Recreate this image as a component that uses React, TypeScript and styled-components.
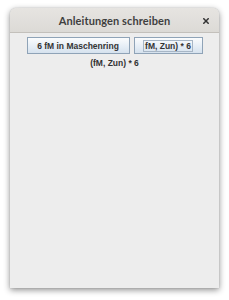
import React from "react";
import styled, { createGlobalStyle } from "styled-components";

const Global = createGlobalStyle`
  html, body { margin: 0; padding: 0; background: #ffffff; }
  #root { width: 229px; height: 300px; }
`;

const Stage = styled.div`
  width: 229px;
  height: 300px;
  padding: 8px 0 0 10px;
  box-sizing: border-box;
`;

const Window = styled.div`
  width: 209px;
  height: 280px;
  display: flex;
  flex-direction: column;
  background: #ededed;
  border-radius: 6px 6px 0 0;
  box-shadow: 0 2px 6px rgba(0, 0, 0, 0.45), 0 0 1px rgba(0, 0, 0, 0.3);
  overflow: hidden;
`;

const TitleBar = styled.div`
  height: 25px;
  flex: none;
  display: flex;
  align-items: center;
  justify-content: center;
  position: relative;
  background: linear-gradient(#e6e4e1, #dcdad6);
  border-bottom: 1px solid #c3c0bb;
  box-sizing: border-box;
`;

const Title = styled.span`
  font-family: Lato, "Noto Sans", sans-serif;
  font-weight: 700;
  font-size: 11px;
  color: #3f3f3f;
  letter-spacing: 0.1px;
`;

const Close = styled.span`
  position: absolute;
  right: 9px;
  top: 8px;
  width: 9px;
  height: 9px;
  display: flex;
  align-items: center;
  justify-content: center;
`;

const Content = styled.div`
  display: flex;
  flex-direction: column;
  align-items: center;
  padding-top: 4px;
  gap: 2px;
`;

const ButtonRow = styled.div`
  display: flex;
  gap: 4px;
`;

const Button = styled.button<{ $w: number }>`
  width: ${(p) => p.$w}px;
  height: 17px;
  padding: 0;
  margin: 0;
  border: 1px solid #8fa3b7;
  background: linear-gradient(#fbfcfd, #e6eef6 55%, #d6e2ee);
  font-family: "Liberation Sans", Arial, sans-serif;
  font-weight: 700;
  font-size: 8.5px;
  color: #333;
  display: flex;
  align-items: center;
  justify-content: center;
  box-sizing: border-box;
`;

const Focus = styled.span`
  border: 1px solid #a7b6c6;
  padding: 1px 1px;
  line-height: 8px;
`;

const Label = styled.div`
  font-family: "Liberation Sans", Arial, sans-serif;
  font-weight: 700;
  font-size: 8.5px;
  color: #333;
  line-height: 12px;
  margin-top: 1px;
`;

export default function App() {
  return (
    <>
      <Global />
      <Stage>
        <Window>
          <TitleBar>
            <Title>Anleitungen schreiben</Title>
            <Close>
              <svg width="6" height="6" viewBox="0 0 6 6">
                <path d="M0.8 0.8 L5.2 5.2 M5.2 0.8 L0.8 5.2" stroke="#333" strokeWidth="1.5" strokeLinecap="square" />
              </svg>
            </Close>
          </TitleBar>
          <Content>
            <ButtonRow>
              <Button $w={103}>6 fM in Maschenring</Button>
              <Button $w={69}>
                <Focus>fM, Zun) * 6</Focus>
              </Button>
            </ButtonRow>
            <Label>(fM, Zun) * 6</Label>
          </Content>
        </Window>
      </Stage>
    </>
  );
}
